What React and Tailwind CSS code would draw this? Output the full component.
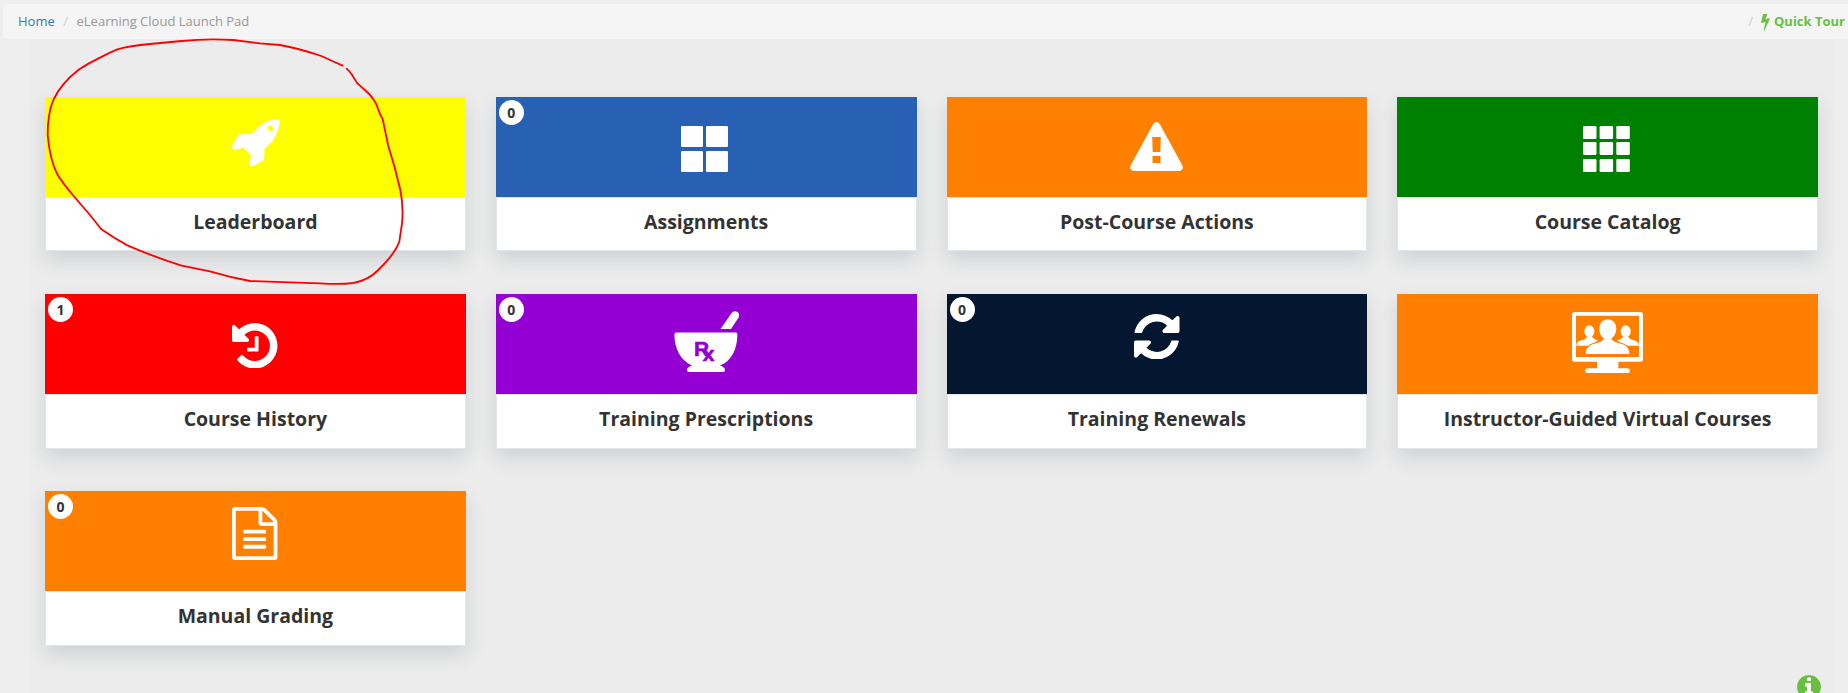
const HistoryIcon = () => (
  <svg className="mt-[29px] mr-px h-[45.5px] w-[45.5px]" viewBox="0 128 1536 1536" fill="currentColor">
    <path d="M1536 896q0 156-61 298t-164 245-245 164-298 61q-172 0-327-72.5t-264-204.5q-7-10-6.5-22.5t8.5-20.5l137-138q10-9 25-9 16 2 23 12 73 95 179 147t225 52q104 0 198.5-40.5t163.5-109.5 109.5-163.5 40.5-198.5-40.5-198.5-109.5-163.5-163.5-109.5-198.5-40.5q-98 0-188 35.5t-160 101.5l137 138q31 30 14 69-17 40-59 40h-448q-26 0-45-19t-19-45v-448q0-42 40-59 39-17 69 14l130 129q107-101 244.5-156.5t284.5-55.5q156 0 298 61t245 164 164 245 61 298zm-640-288v448q0 14-9 23t-23 9h-320q-14 0-23-9t-9-23v-64q0-14 9-23t23-9h224v-352q0-14 9-23t23-9h64q14 0 23 9t9 23z" />
  </svg>
);

const RefreshIcon = () => (
  <svg className="mt-5 h-[45.5px] w-[45.5px]" viewBox="0 128 1536 1536" fill="currentColor">
    <path d="M1511 1056q0 5-1 7-64 268-268 434.5t-478 166.5q-146 0-282.5-55t-243.5-157l-129 129q-19 19-45 19t-45-19-19-45v-448q0-26 19-45t45-19h448q26 0 45 19t19 45-19 45l-137 137q71 66 161 102t187 36q134 0 250-65t186-179q11-17 53-117 8-23 30-23h192q13 0 22.5 9.5t9.5 22.5zm25-800v448q0 26-19 45t-45 19h-448q-26 0-45-19t-19-45 19-45l138-138q-148-137-349-137-134 0-250 65t-186 179q-11 17-53 117-8 23-30 23h-199q-13 0-22.5-9.5t-9.5-22.5v-7q65-268 270-434.5t480-166.5q146 0 284 55.5t245 156.5l130-129q19-19 45-19t45 19 19 45z" />
  </svg>
);

const FileIcon = () => (
  <svg className="mt-4 mr-px h-[53px] w-[45.5px]" viewBox="0 0 1536 1792" fill="currentColor">
    <path d="M1468 380q28 28 48 76t20 88v1152q0 40-28 68t-68 28h-1344q-40 0-68-28t-28-68v-1600q0-40 28-68t68-28h896q40 0 88 20t76 48zm-444-244v376h376q-10-29-22-41l-313-313q-12-12-41-22zm384 1528v-1024h-416q-40 0-68-28t-28-68v-416h-768v1536h1280zm-1024-864q0-14 9-23t23-9h704q14 0 23 9t9 23v64q0 14-9 23t-23 9h-704q-14 0-23-9t-9-23v-64zm736 224q14 0 23 9t9 23v64q0 14-9 23t-23 9h-704q-14 0-23-9t-9-23v-64q0-14 9-23t23-9h704zm0 256q14 0 23 9t9 23v64q0 14-9 23t-23 9h-704q-14 0-23-9t-9-23v-64q0-14 9-23t23-9h704z" />
  </svg>
);

const RocketIcon = () => (
  <svg className="mt-[22px] ml-px h-12 w-12" viewBox="96 87 144 144" fill="currentColor" fillRule="evenodd">
    <path d="M239 87C205 86 178 105 154 132L121 133Q115 134 112 139L97 166Q94 172 99 178Q103 181 130 173L153 195L148 220Q148 230 157 229Q161 228 190 211Q194 208 193 176C222 154 240 125 239 87ZM211 107a8 8 0 1 1 0 16a8 8 0 0 1 0-16Z" />
  </svg>
);

const LargeGridIcon = () => (
  <svg className="mt-[29px] mr-1 h-[46px] w-[47px]" viewBox="0 0 47 46" fill="currentColor">
    <rect x="0" y="0" width="22" height="21" rx="1.3" />
    <rect x="25" y="0" width="22" height="21" rx="1.3" />
    <rect x="0" y="25" width="22" height="21" rx="1.3" />
    <rect x="25" y="25" width="22" height="21" rx="1.3" />
  </svg>
);

const SmallGridIcon = () => (
  <svg className="mt-[29px] mr-[3px] h-[46px] w-[47px]" viewBox="0 0 47 46" fill="currentColor">
    {[0, 16, 33].map((y) =>
      [0, 16.6, 33.3].map((x) => <rect key={`${x}-${y}`} x={x} y={y} width="13.5" height="13" rx="1.3" />)
    )}
  </svg>
);

const WarningIcon = () => (
  <svg className="mt-[25px] h-[49px] w-[53px]" viewBox="0 0 53 49" fill="currentColor" fillRule="evenodd">
    <path d="M23.1 2.2Q26.5-2.2 29.9 2.2L52.4 43.6Q54 47.6 49.6 49H3.4Q-1 47.6.6 43.6ZM22.2 15L22.7 30H30.3L30.8 15ZM22.5 34V41H30.5V34Z" />
  </svg>
);

const MortarIcon = () => (
  <svg className="mt-[17px] h-[61px] w-[65px]" viewBox="0 0 65 61" fill="currentColor">
    <path d="M46.5 18L57.3 2.4Q59.5-.6 63 .8Q66.4 3 64.6 6.4L57 18Z" />
    <path d="M2 21.5H61.8Q63.5 21.5 63.4 23.4C63.3 37 58 50 46 54.5Q50.5 56 51 58.5Q51 61 49 61H15Q12.8 61 13 58.5Q13.5 56 18 54.5C6 49 .5 37 .4 23.4Q.4 21.5 2 21.5Z" />
    <text x="20" y="44.5" fontSize="21" fontWeight="700" fontFamily="Liberation Sans, Arial, sans-serif" fill="#9400d3" stroke="#9400d3" strokeWidth=".6">
      R<tspan dx="-6.5" dy="5">x</tspan>
    </text>
  </svg>
);

const VirtualClassIcon = () => (
  <svg className="mt-[18px] h-[61px] w-[71px]" viewBox="96 66 213 183" fill="currentColor">
    <path fillRule="evenodd" d="M104 66H301Q309 66 309 74V207Q309 215 301 215H235V235H264Q270 236 270 242Q270 249 264 249H141Q135 249 135 242Q135 236 141 235H171V215H104Q96 215 96 207V74Q96 66 104 66ZM108 77V201H297V77Z" />
    <ellipse cx="148" cy="124" rx="15" ry="18" />
    <ellipse cx="257" cy="124" rx="15" ry="18" />
    <path d="M141 136H156Q155 147 174 151L152 167H109Q109 155 125 151Q142 147 141 136Z" />
    <path d="M249 136H265Q263 147 281 151Q297 155 297 167H254L231 151Q251 147 249 136Z" />
    <path d="M137 194Q134 170 158 162Q191 154 192 144L178 118Q178 88 203 88Q229 88 229 118L214 144Q215 154 248 162Q271 170 268 194Z" stroke="#ff8000" strokeWidth="4" />
    <path d="M137 192Q137 170 158 163Q190 155 193 146Q178 136 178 116Q180 89 203 88Q227 89 229 116Q228 136 213 146Q216 155 248 163Q268 170 268 192Z" />
  </svg>
);

const tiles = [
  { title: 'Leaderboard', color: 'bg-[#ffff00]', icon: RocketIcon },
  { title: 'Assignments', color: 'bg-[#2860b4]', icon: LargeGridIcon, count: 0 },
  { title: 'Post-Course Actions', color: 'bg-[#ff8000]', icon: WarningIcon },
  { title: 'Course Catalog', color: 'bg-[#008000]', icon: SmallGridIcon },
  { title: 'Course History', color: 'bg-[#ff0000]', icon: HistoryIcon, count: 1 },
  { title: 'Training Prescriptions', color: 'bg-[#9400d3]', icon: MortarIcon, count: 0 },
  { title: 'Training Renewals', color: 'bg-[#041630]', icon: RefreshIcon, count: 0 },
  { title: 'Instructor-Guided Virtual Courses', color: 'bg-[#ff8000]', icon: VirtualClassIcon },
  { title: 'Manual Grading', color: 'bg-[#ff8000]', icon: FileIcon, count: 0 },
];

const Tile = ({ title, color, icon: Icon, count }) => (
  <a className="block h-[154.8px] shadow-[0_9px_18px_rgba(40,60,75,0.15)]">
    <div className={`relative flex h-[100px] items-start justify-center text-white ${color}`}>
      {count !== undefined && (
        <span className="absolute top-[3px] left-[3px] flex h-[25px] w-[25px] items-center justify-center rounded-full bg-white pt-px text-sm font-bold text-[#333]">
          {count}
        </span>
      )}
      <Icon />
    </div>
    <div className="h-[54.8px] border border-[#e1e6ea] bg-white pt-[10px] text-center text-[19.5px] leading-[27px] font-bold text-[#333]">
      {title}
    </div>
  </a>
);

const Breadcrumb = () => (
  <nav className="ml-[3px] flex h-[35px] items-center justify-between rounded-l bg-[#f5f5f5] pr-[3px] pl-[15px] text-[13px]">
    <div className="flex items-center">
      <a className="text-[#337ab7]">Home</a>
      <span className="px-[8.5px] text-[#ccc]">/</span>
      <span className="text-[#999]">eLearning Cloud Launch Pad</span>
    </div>
    <div className="flex items-center">
      <span className="pr-2 text-[#ccc]">/</span>
      <a className="flex items-center gap-1 font-bold text-[#6abf40]">
        <svg className="mt-0.5 h-[16.5px] w-[9px]" viewBox="448 128 896 1664" fill="currentColor">
          <path d="M1333 566q18 20 7 44l-540 1157q-13 25-42 25-4 0-14-2-17-5-25.5-19t-4.5-30l197-808-406 101q-4 1-12 1-18 0-31-11-18-15-13-39l201-825q4-14 16-23t28-9h328q19 0 32 12.5t13 29.5q0 8-5 18l-171 463 396-98q8-2 12-2 19 0 34 15z" />
        </svg>
        Quick Tour
      </a>
    </div>
  </nav>
);

const App = () => {
  return (
    <div className="relative h-[693px] overflow-hidden bg-[#eee] pt-1 font-['Open_Sans',sans-serif]">
      <Breadcrumb />
      <main className="mr-[15px] ml-[30px] h-full bg-[#ececec] px-[15px] pt-[57.6px]">
        <div className="grid grid-cols-4 gap-x-[30px] gap-y-[42.4px]">
          {tiles.map((tile) => (
            <Tile key={tile.title} {...tile} />
          ))}
        </div>
      </main>

      {/* Help button */}
      <button className="absolute top-[675px] left-[1797px]">
        <svg className="h-6 w-6" viewBox="128 128 1536 1536" fill="#6abf40">
          <circle cx="896" cy="896" r="740" fill="#fff" />
          <path d="M1152 1376v-160q0-14-9-23t-23-9h-96v-512q0-14-9-23t-23-9h-320q-14 0-23 9t-9 23v160q0 14 9 23t23 9h96v320h-96q-14 0-23 9t-9 23v160q0 14 9 23t23 9h448q14 0 23-9t9-23zm-128-896v-160q0-14-9-23t-23-9h-192q-14 0-23 9t-9 23v160q0 14 9 23t23 9h192q14 0 23-9t9-23zm640 416q0 209-103 385.5t-279.5 279.5-385.5 103-385.5-103-279.5-279.5-103-385.5 103-385.5 279.5-279.5 385.5-103 385.5 103 279.5 279.5 103 385.5z" />
        </svg>
      </button>

      {/* Hand-drawn circle around the first tile */}
      <svg className="pointer-events-none absolute top-0 left-0 h-[300px] w-[480px]" viewBox="0 0 1440 900" fill="none" stroke="#f00" strokeWidth="5.5" strokeLinecap="round" strokeLinejoin="round">
        <path d="M1028 197Q990 180 964 168C920 153 880 142 840 135L780 130L700 120Q620 115 545 123L450 132Q390 137 352 148Q325 159 300 173Q265 190 238 208C205 233 175 268 160 300C145 335 143 370 143 405C147 450 155 490 172 523C190 553 210 575 226 594L270 645Q290 670 303 687Q340 713 382 736Q460 770 545 797L630 814Q690 832 750 843Q850 846 960 850Q1020 854 1060 849C1090 844 1115 830 1135 810C1160 786 1185 760 1198 725L1206 670Q1211 620 1201 570Q1185 500 1164 434L1148 357Q1140 345 1130 315Q1118 290 1098 273L1073 251Q1062 235 1057 226Q1050 215 1040 206" />
      </svg>
    </div>
  );
};

export default App;
